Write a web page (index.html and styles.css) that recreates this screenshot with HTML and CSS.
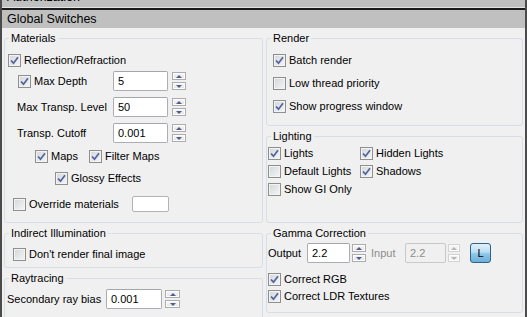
FILE: index.html
```html
<!DOCTYPE html>
<html lang="en">
<head>
    <meta charset="UTF-8">
    <meta name="viewport" content="width=device-width, initial-scale=1.0">
    <title>Global Switches</title>
    <link rel="stylesheet" href="styles.css">
</head>
<body>
<div class="rollout">
    <div class="rollout-title prev">Authorization</div>
    <div class="rollout-title">Global Switches</div>
    <div class="panel">
        <div class="col left">
            <fieldset class="group materials">
                <legend>Materials</legend>
                <label class="check refl"><span class="cb"><svg viewBox="0 0 11 11"><path d="M2 5.5L4.5 8.2L9 2.3"/></svg></span>Reflection/Refraction</label>
                <div class="spin-row first">
                    <label class="check spin-label"><span class="cb depth-cb"><svg viewBox="0 0 11 11"><path d="M2 5.5L4.5 8.2L9 2.3"/></svg></span>Max Depth</label>
                    <input class="num" type="text" value="5">
                    <span class="spin"><span class="up"></span><span class="down"></span></span>
                </div>
                <div class="spin-row">
                    <span class="spin-label">Max Transp. Level</span>
                    <input class="num" type="text" value="50">
                    <span class="spin"><span class="up"></span><span class="down"></span></span>
                </div>
                <div class="spin-row">
                    <span class="spin-label">Transp. Cutoff</span>
                    <input class="num" type="text" value="0.001">
                    <span class="spin"><span class="up"></span><span class="down"></span></span>
                </div>
                <div class="maps-row">
                    <label class="check maps"><span class="cb"><svg viewBox="0 0 11 11"><path d="M2 5.5L4.5 8.2L9 2.3"/></svg></span>Maps</label>
                    <label class="check"><span class="cb"><svg viewBox="0 0 11 11"><path d="M2 5.5L4.5 8.2L9 2.3"/></svg></span>Filter Maps</label>
                </div>
                <label class="check glossy"><span class="cb"><svg viewBox="0 0 11 11"><path d="M2 5.5L4.5 8.2L9 2.3"/></svg></span>Glossy Effects</label>
                <div class="override-row">
                    <label class="check override"><span class="cb"></span>Override materials</label>
                    <span class="swatch"></span>
                </div>
            </fieldset>
            <fieldset class="group indirect">
                <legend>Indirect Illumination</legend>
                <label class="check final"><span class="cb"></span>Don't render final image</label>
            </fieldset>
            <fieldset class="group raytracing">
                <legend>Raytracing</legend>
                <div class="ray-row">
                    <span class="ray-label">Secondary ray bias</span>
                    <input class="num ray" type="text" value="0.001">
                    <span class="spin wide"><span class="up"></span><span class="down"></span></span>
                </div>
            </fieldset>
        </div>
        <div class="col right">
            <fieldset class="group render">
                <legend>Render</legend>
                <label class="check"><span class="cb"><svg viewBox="0 0 11 11"><path d="M2 5.5L4.5 8.2L9 2.3"/></svg></span>Batch render</label>
                <label class="check"><span class="cb"></span>Low thread priority</label>
                <label class="check"><span class="cb"><svg viewBox="0 0 11 11"><path d="M2 5.5L4.5 8.2L9 2.3"/></svg></span>Show progress window</label>
            </fieldset>
            <fieldset class="group lighting">
                <legend>Lighting</legend>
                <div class="light-grid">
                    <label class="check"><span class="cb"><svg viewBox="0 0 11 11"><path d="M2 5.5L4.5 8.2L9 2.3"/></svg></span>Lights</label>
                    <label class="check"><span class="cb"><svg viewBox="0 0 11 11"><path d="M2 5.5L4.5 8.2L9 2.3"/></svg></span>Hidden Lights</label>
                    <label class="check"><span class="cb"></span>Default Lights</label>
                    <label class="check"><span class="cb"><svg viewBox="0 0 11 11"><path d="M2 5.5L4.5 8.2L9 2.3"/></svg></span>Shadows</label>
                    <label class="check"><span class="cb"></span>Show GI Only</label>
                </div>
            </fieldset>
            <fieldset class="group gamma">
                <legend>Gamma Correction</legend>
                <div class="gamma-row">
                    <span class="out-label">Output</span>
                    <input class="num out" type="text" value="2.2">
                    <span class="spin"><span class="up"></span><span class="down"></span></span>
                    <span class="in-label">Input</span>
                    <input class="num in" type="text" value="2.2" disabled>
                    <span class="spin off"><span class="up"></span><span class="down"></span></span>
                    <button class="lock">L</button>
                </div>
                <label class="check rgb"><span class="cb"><svg viewBox="0 0 11 11"><path d="M2 5.5L4.5 8.2L9 2.3"/></svg></span>Correct RGB</label>
                <label class="check ldr"><span class="cb"><svg viewBox="0 0 11 11"><path d="M2 5.5L4.5 8.2L9 2.3"/></svg></span>Correct LDR Textures</label>
            </fieldset>
        </div>
    </div>
</div>
</body>
</html>
```
FILE: styles.css
```css
* {
    box-sizing: border-box;
}
body {
    margin: 0;
    background: #f0f0f0;
    font-family: "Liberation Sans", Arial, sans-serif;
    font-size: 11px;
    color: #000;
}
.rollout {
    width: 527px;
    height: 317px;
    overflow: hidden;
    border-left: 2px solid #4b4b4b;
    border-right: 2px solid #4b4b4b;
}
.rollout-title {
    height: 20px;
    line-height: 18px;
    padding-left: 5px;
    font-size: 12.5px;
    background: #c0c0c0;
    border-top: 2px solid #1c1c1c;
}
.rollout-title.prev {
    height: 8px;
    line-height: 15px;
    padding-bottom: 2px;
    border-top: 0;
    border-bottom: 1px solid #e4e4e4;
    display: flex;
    align-items: flex-end;
    overflow: hidden;
}
.panel {
    display: flex;
    gap: 3px;
    padding: 4px 2px 0;
}
.col {
    display: flex;
    flex-direction: column;
    gap: 4px;
}
.col.left {
    width: 259px;
}
.col.right {
    width: 257px;
}
fieldset.group {
    margin: 0;
    padding: 0;
    min-width: 0;
    border: 1px solid #d5dfe5;
    border-radius: 3px;
}
legend {
    margin-left: 4px;
    padding: 0 2px;
    line-height: 13px;
}
.materials { height: 191px; }
.indirect { height: 41px; }
.raytracing { height: 60px; }
.render { height: 94px; }
.lighting { height: 93px; }
.gamma { height: 86px; }

/* checkboxes */
.check {
    display: flex;
    align-items: center;
    height: 16px;
    white-space: nowrap;
}
.cb {
    flex: none;
    width: 13px;
    height: 13px;
    margin-right: 3px;
    border: 1px solid #8e8f8f;
    background: linear-gradient(135deg, #d3d5d8, #f6f6f6);
    box-shadow: inset 0 0 0 1px #f3f3f3;
}
.cb svg {
    display: block;
    width: 11px;
    height: 11px;
}
.cb path {
    fill: none;
    stroke: #4f64a0;
    stroke-width: 1.7;
}

/* number fields */
.num {
    height: 20px;
    padding: 0 0 0 4px;
    border: 1px solid #abadb3;
    border-top-color: #a3a6ad;
    border-radius: 2px;
    background: #fff;
    font-family: inherit;
    font-size: 11px;
    color: #000;
    outline: none;
}
.num:disabled {
    background: #f0f0f0;
    border-color: #c9c9c9;
    color: #8d8d8d;
}
.spin {
    flex: none;
    display: flex;
    flex-direction: column;
    gap: 2px;
    width: 14px;
    height: 18px;
}
.spin span {
    flex: 1;
    display: flex;
    align-items: center;
    justify-content: center;
    border: 1px solid #acacac;
    background: linear-gradient(#f8f8f8, #e2e2e2);
    box-shadow: inset 0 0 0 1px #fdfdfd;
}
.spin .up::after {
    content: "";
    border-left: 3px solid transparent;
    border-right: 3px solid transparent;
    border-bottom: 3px solid #4c5f8c;
}
.spin .down::after {
    content: "";
    border-left: 3px solid transparent;
    border-right: 3px solid transparent;
    border-top: 3px solid #4c5f8c;
}
.spin.off span {
    border-color: #d2d2d2;
    background: #f2f2f2;
}
.spin.off .up::after { border-bottom-color: #b5b5b5; }
.spin.off .down::after { border-top-color: #b5b5b5; }

/* materials */
.refl {
    margin: 7px 0 0 3px;
}
.spin-row {
    display: flex;
    align-items: center;
    height: 20px;
    margin: 6px 0 0 12px;
}
.spin-row.first {
    margin-top: 3px;
}
.spin-label {
    width: 96px;
}
.depth-cb {
    margin-left: 1px;
}
.spin-row .num {
    width: 55px;
}
.spin-row .spin {
    margin-left: 4px;
}
.maps-row {
    display: flex;
    margin: 5px 0 0 30px;
}
.maps {
    width: 54px;
}
.glossy {
    margin: 6px 0 0 50px;
}
.override-row {
    display: flex;
    align-items: center;
    margin: 10px 0 0 8px;
}
.override {
    width: 119px;
}
.swatch {
    width: 37px;
    height: 16px;
    border: 1px solid #b4b4b4;
    border-radius: 2px;
    background: #fff;
}

/* indirect / raytracing */
.final {
    margin: 6px 0 0 8px;
}
.ray-row {
    display: flex;
    align-items: center;
    height: 20px;
    margin: 4px 0 0 2px;
}
.ray-label {
    width: 99px;
}
.num.ray {
    width: 56px;
}
.spin.wide {
    width: 15px;
    margin-left: 3px;
}

/* render / lighting */
.render .check {
    margin: 7px 0 0 6px;
}
.light-grid {
    display: grid;
    grid-template-columns: 92px auto;
    grid-auto-rows: 16px;
    row-gap: 2px;
    margin: 2px 0 0 1px;
}

/* gamma */
.gamma-row {
    display: flex;
    align-items: center;
    height: 20px;
    margin: 3px 0 0 1px;
}
.out-label {
    width: 39px;
}
.num.out {
    width: 43px;
}
.gamma-row .spin {
    margin-left: 2px;
}
.in-label {
    width: 34px;
    margin-left: 5px;
    color: #8d8d8d;
}
.num.in {
    width: 41px;
}
.spin.off {
    width: 12px;
}
.lock {
    width: 21px;
    height: 20px;
    margin-left: 10px;
    padding: 0;
    border: 1px solid #2c628b;
    border-radius: 3px;
    background: linear-gradient(#e2f2fb, #b9def3 45%, #8fc6e7 55%, #6cb0da);
    font-family: inherit;
    font-size: 11px;
    color: #000;
}
.rgb {
    margin: 8px 0 0 1px;
}
.ldr {
    margin: 1px 0 0 1px;
}
```
